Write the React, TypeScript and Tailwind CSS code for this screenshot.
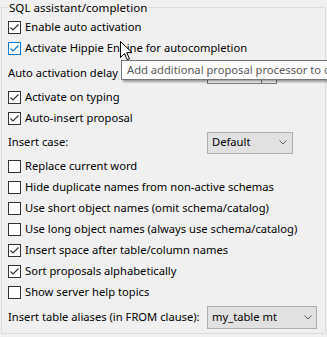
import React from "react";

const font = { fontFamily: '"Noto Sans", "Segoe UI", sans-serif' };

function Check({ checked, hover }: { checked?: boolean; hover?: boolean }) {
  const c = hover ? "#0078d7" : "#333333";
  return (
    <span
      className={`flex h-[13px] w-[13px] shrink-0 items-center justify-center border bg-white ${hover ? "border-[#0078d7]" : "border-[#333333]"}`}
    >
      {checked && (
        <svg width="11" height="11" viewBox="0 0 11 11">
          <polyline points="1.5,5.5 4,8 9.5,2.5" fill="none" stroke={c} strokeWidth="1.2" />
        </svg>
      )}
    </span>
  );
}

function CheckRow({ label, checked, hover }: { label: string; checked?: boolean; hover?: boolean }) {
  return (
    <div className="flex h-[21px] items-center pl-[6px]">
      <Check checked={checked} hover={hover} />
      <span className="ml-[4px] whitespace-nowrap">{label}</span>
    </div>
  );
}

function Chevron() {
  return (
    <svg width="8" height="5" viewBox="0 0 8 5">
      <polyline points="0.5,0.5 4,4 7.5,0.5" fill="none" stroke="#606060" strokeWidth="1" />
    </svg>
  );
}

export default function App() {
  return (
    <div className="relative h-[337px] w-[327px] overflow-hidden bg-[#f0f0f0] text-[11.2px] text-black" style={font}>
      <fieldset className="ml-[1px] h-[334px] w-[325px] border border-[#dcdcdc]">
        <legend className="ml-[6px] px-[1px] text-[11.6px] leading-[15px]">SQL assistant/completion</legend>
        <div className="flex flex-col pt-[2px]">
          <CheckRow label="Enable auto activation" checked />
          <CheckRow label="Activate Hippie Engine for autocompletion" checked hover />
          <div className="grid h-[28px] grid-cols-[205px_auto] items-center">
            <span className="pl-[6px]">Auto activation delay</span>
            <div className="flex h-[21px] w-[70px] border border-[#7a7a7a] bg-white">
              <div className="flex-1" />
              <div className="w-[15px] border-l border-[#7a7a7a]" />
            </div>
          </div>
          <CheckRow label="Activate on typing" checked />
          <CheckRow label="Auto-insert proposal" checked />
          <div className="grid h-[27px] grid-cols-[205px_auto] items-center">
            <span className="pl-[6px]">Insert case:</span>
            <div className="flex h-[22px] w-[86px] items-center justify-between border border-[#adadad] bg-[#e1e1e1] pl-[4px] pr-[5px]">
              <span>Default</span>
              <Chevron />
            </div>
          </div>
          <CheckRow label="Replace current word" />
          <CheckRow label="Hide duplicate names from non-active schemas" />
          <CheckRow label="Use short object names (omit schema/catalog)" />
          <CheckRow label="Use long object names (always use schema/catalog)" />
          <CheckRow label="Insert space after table/column names" checked />
          <CheckRow label="Sort proposals alphabetically" checked />
          <CheckRow label="Show server help topics" />
          <div className="grid h-[28px] grid-cols-[205px_auto] items-center">
            <span className="whitespace-nowrap pl-[6px]">Insert table aliases (in FROM clause):</span>
            <div className="flex h-[23px] w-[110px] items-center justify-between border border-[#adadad] bg-[#e1e1e1] pl-[4px] pr-[4px]">
              <span>my_table mt</span>
              <Chevron />
            </div>
          </div>
        </div>
      </fieldset>

      {/* tooltip */}
      <div className="absolute left-[121px] top-[60px] flex h-[20px] items-center whitespace-nowrap border border-[#767676] bg-white pl-[5px] pr-[5px] text-[#575757] shadow-[2px_2px_2px_rgba(0,0,0,0.35)]">
        Add additional proposal processor to completion
      </div>

      {/* mouse cursor */}
      <svg className="absolute left-[120px] top-[41px]" width="13" height="20" viewBox="0 0 13 20">
        <polygon
          points="0.5,0.5 0.5,16.5 4.5,12.5 7.2,18.8 9.4,17.8 6.8,11.6 12,11.6"
          fill="white"
          stroke="black"
          strokeWidth="1"
          strokeLinejoin="miter"
        />
      </svg>
    </div>
  );
}
